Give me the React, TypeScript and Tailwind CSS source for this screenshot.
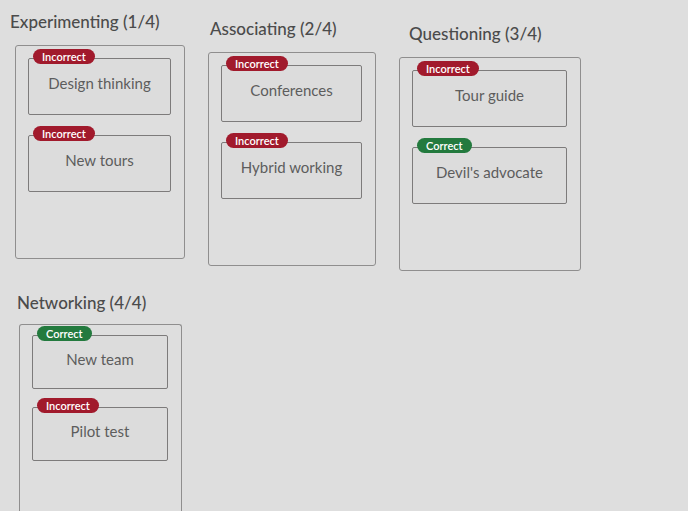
import React from 'react';

type Item = { label: string; correct: boolean };
type Group = { title: string; items: Item[]; offset: string; titleShift: string; width: string };

const GROUPS: Group[] = [
    {
        title: 'Experimenting (1/4)',
        offset: 'mt-0',
        titleShift: '-ml-[5px]',
        width: 'w-[170px]',
        items: [
            { label: 'Design thinking', correct: false },
            { label: 'New tours', correct: false },
        ],
    },
    {
        title: 'Associating (2/4)',
        offset: 'mt-[7px]',
        titleShift: 'ml-[2px]',
        width: 'w-[168px]',
        items: [
            { label: 'Conferences', correct: false },
            { label: 'Hybrid working', correct: false },
        ],
    },
    {
        title: 'Questioning (3/4)',
        offset: 'mt-[12px]',
        titleShift: 'ml-[10px]',
        width: 'w-[182px]',
        items: [
            { label: 'Tour guide', correct: false },
            { label: "Devil's advocate", correct: true },
        ],
    },
];

const NETWORKING: Group = {
    title: 'Networking (4/4)',
    offset: 'mt-0',
    titleShift: '-ml-[2px]',
    width: 'w-[163px]',
    items: [
        { label: 'New team', correct: true },
        { label: 'Pilot test', correct: false },
    ],
};

const Badge: React.FC<{ correct: boolean }> = ({ correct }) => (
    <span
        className={`absolute -top-[10px] left-[4px] rounded-full px-[9px] h-[15px] flex items-center text-[11px] font-semibold leading-none text-white ${
            correct ? 'bg-[#237a3e]' : 'bg-[#a11a2c]'
        }`}
    >
        {correct ? 'Correct' : 'Incorrect'}
    </span>
);

const Card: React.FC<{ item: Item; short?: boolean }> = ({ item, short }) => (
    <div
        className={`relative rounded-[2px] border border-[#7d7b7b] bg-[#dcdcdc] flex justify-center ${
            short ? 'h-[54px] pt-[16px]' : 'h-[57px] pt-[17px]'
        }`}
    >
        <Badge correct={item.correct} />
        <span className="text-[15px] leading-none text-[#5d5d5d]">{item.label}</span>
    </div>
);

const Column: React.FC<{ group: Group; tall?: boolean }> = ({ group, tall }) => (
    <section className={`${group.width} ${group.offset}`}>
        <h2 className={`${group.titleShift} text-[17px] leading-[22px] text-[#4b4b4b] font-medium whitespace-nowrap`}>{group.title}</h2>
        <div
            className={`rounded-[3px] border border-[#8f8e8e] pl-[12px] pr-[13px] flex flex-col ${
                tall ? 'mt-[10px] pt-[10px] gap-[18px] h-[200px] border-b-0 rounded-b-none' : 'mt-[12px] pt-[12px] gap-[20px] h-[214px]'
            }`}
        >
            {group.items.map((it) => (
                <Card key={it.label} item={it} short={tall} />
            ))}
        </div>
    </section>
);

const App: React.FC = () => (
    <div className="w-[688px] h-[511px] overflow-hidden bg-[#dedede] pl-[15px] pt-[11px]" style={{ fontFamily: 'Lato, "Open Sans", sans-serif' }}>
        <div className="flex items-start gap-[23px]">
            {GROUPS.map((g) => (
                <Column key={g.title} group={g} />
            ))}
        </div>
        <div className="mt-[21px] ml-[4px]">
            <Column group={NETWORKING} tall />
        </div>
    </div>
);

export default App;
